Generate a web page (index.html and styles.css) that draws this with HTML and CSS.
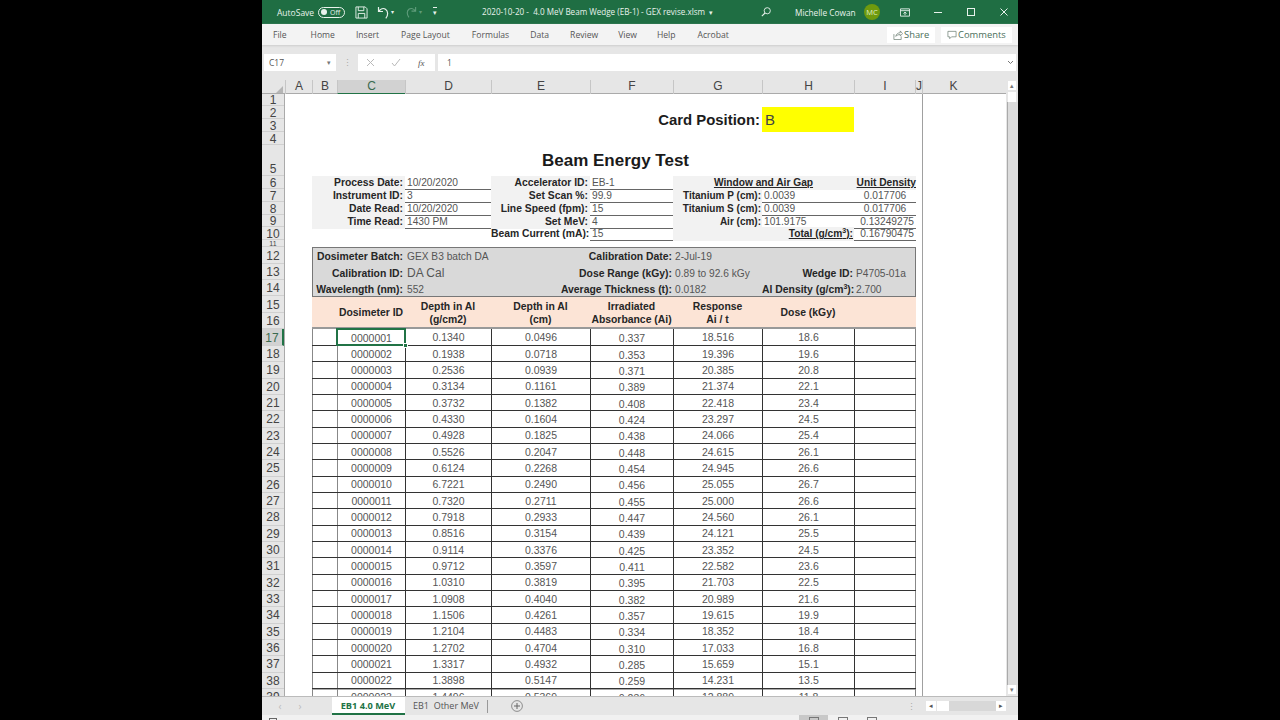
FILE: index.html
```html
<!DOCTYPE html>
<html lang="en">
<head>
<meta charset="utf-8">
<title>2020-10-20 - 4.0 MeV Beam Wedge (EB-1) - GEX revise.xlsm - Excel</title>
<link rel="stylesheet" href="styles.css">
</head>
<body>
<div class="app">
  <header class="titlebar">
    <div class="tb-left">
      <span class="autosave">AutoSave</span>
      <span class="toggle"><i class="knob"></i>Off</span>
      <svg class="qa save" viewBox="0 0 14 14" width="13" height="13"><path d="M1 1h10l2 2v10H1zM3.500 1v4h6V1M3.500 13V8h7v5" fill="none" stroke="#e8f2ec" stroke-width="1"/></svg>
      <svg class="qa undo" viewBox="0 0 12 13" width="12" height="13"><path d="M1.500 1v4.500H6M1.700 5.300C3.500 2.800 6.500 2 8.500 3.300c2.800 2 2.800 6 .3 9" fill="none" stroke="#e8f2ec" stroke-width="1.200"/></svg>
      <span class="caret">▾</span>
      <svg class="qa redo" viewBox="0 0 12 13" width="11" height="12"><path d="M10.500 1v4.500H6M10.300 5.300C8.500 2.800 5.500 2 3.500 3.300c-2.800 2-2.800 6-.3 9" fill="none" stroke="#5f9c7b" stroke-width="1.200"/></svg>
      <span class="caret dim">▾</span>
      <span class="customize">▾</span>
    </div>
    <div class="doc-title">2020-10-20 -&nbsp; 4.0 MeV Beam Wedge (EB-1) - GEX revise.xlsm <span class="doc-caret">▾</span></div>
    <div class="tb-right">
      <svg class="search" viewBox="0 0 12 12" width="10" height="10"><circle cx="7.500" cy="4.500" r="3.700" fill="none" stroke="#e8f2ec" stroke-width="1.100"/><path d="M4.800 7.200L1 11" stroke="#e8f2ec" stroke-width="1.300"/></svg>
      <span class="user">Michelle Cowan</span>
      <span class="avatar">MC</span>
      <svg class="ribbon-opt" viewBox="0 0 11 9" width="10" height="9"><path d="M.5 .5h10v8H.5zM.5 2.500h10M5.500 7.500V4M3.800 5.700l1.700-1.700 1.700 1.700" fill="none" stroke="#e8f2ec"/></svg>
      <span class="win-min"></span>
      <span class="win-max"></span>
      <svg class="win-close" viewBox="0 0 8 8" width="8" height="8"><path d="M.5.500l7 7M7.500.500l-7 7" stroke="#e8f2ec" fill="none"/></svg>
    </div>
  </header>

  <nav class="menubar">
    <span class="menu m-file">File</span>
    <span class="menu m-home">Home</span>
    <span class="menu m-insert">Insert</span>
    <span class="menu m-page">Page Layout</span>
    <span class="menu m-form">Formulas</span>
    <span class="menu m-data">Data</span>
    <span class="menu m-review">Review</span>
    <span class="menu m-view">View</span>
    <span class="menu m-help">Help</span>
    <span class="menu m-acro">Acrobat</span>
    <span class="menu-spacer"></span>
    <span class="menu-btn share"><svg viewBox="0 0 11 11" width="10" height="10"><path d="M1 4.500v6h8V7M3 7c.5-2.500 2.500-4 5-4V1l2.500 3L8 6.500V5c-2 0-3.500.5-5 2z" fill="none" stroke="#6d7f74" stroke-width=".8"/></svg>Share</span>
    <span class="menu-btn comments"><svg viewBox="0 0 11 11" width="10" height="10"><path d="M1 1.500h9v6H5L3 9.500v-2H1z" fill="none" stroke="#6d7f74" stroke-width=".8"/></svg>Comments</span>
  </nav>

  <div class="formulabar">
    <div class="namebox"><span>C17</span><span class="nb-caret">▾</span></div>
    <span class="fb-dots">⋮</span>
    <div class="fb-buttons">
      <svg viewBox="0 0 9 9" width="9" height="9"><path d="M1 1l7 7M8 1L1 8" stroke="#b9b9b9" stroke-width="1" fill="none"/></svg>
      <svg viewBox="0 0 10 9" width="10" height="9"><path d="M1 5l2.500 3L9 1" stroke="#b9b9b9" stroke-width="1" fill="none"/></svg>
      <span class="fx">fx</span>
    </div>
    <div class="fb-input"><span>1</span><svg viewBox="0 0 7 5" width="7" height="5"><path d="M1 1l2.500 2.500L6 1" fill="none" stroke="#777" stroke-width="1"/></svg></div>
  </div>

  <div class="sheet">
    <div class="sheet-main">
      <div class="colhead">
        <div class="corner"><i></i></div>
        <div class="ch">A</div><div class="ch">B</div><div class="ch sel">C</div><div class="ch">D</div><div class="ch">E</div><div class="ch">F</div><div class="ch">G</div><div class="ch">H</div><div class="ch">I</div><div class="ch">J</div><div class="ch">K</div>
      </div>

      <div class="grid-area">
        <div class="rowhead">
          <div class="rh h12">1</div><div class="rh h13">2</div><div class="rh h13">3</div><div class="rh h13">4</div><div class="rh h31">5</div><div class="rh h13">6</div><div class="rh h13">7</div><div class="rh h13">8</div><div class="rh h12">9</div><div class="rh h13">10</div><div class="rh h7">11</div>
          <div class="rh h17">12</div><div class="rh h16">13</div><div class="rh h16">14</div><div class="rh h17">15</div><div class="rh h16">16</div>
          <div class="rh h17 rsel">17</div><div class="rh hr">18</div><div class="rh hr">19</div><div class="rh hr">20</div><div class="rh hr">21</div><div class="rh hr">22</div><div class="rh hr">23</div><div class="rh hr">24</div><div class="rh hr">25</div><div class="rh hr">26</div><div class="rh hr">27</div><div class="rh hr">28</div><div class="rh hr">29</div><div class="rh hr">30</div><div class="rh hr">31</div><div class="rh hr">32</div><div class="rh hr">33</div><div class="rh hr">34</div><div class="rh hr">35</div><div class="rh hr">36</div><div class="rh hr">37</div><div class="rh hr">38</div><div class="rh hr">39</div>
        </div>

        <main class="page">
          <div class="content">
            <div class="card-row">
              <span class="card-label">Card Position:</span>
              <span class="card-value">B</span>
            </div>
            <h1 class="sheet-title">Beam Energy Test</h1>

            <section class="info">
              <div class="irow h13">
                <span class="lab">Process Date:</span><span class="val">10/20/2020</span>
                <span class="lab">Accelerator ID:</span><span class="val">EB-1</span>
                <span class="lab-u c2g"><u>Window and Air Gap</u></span><span class="lab-u ud"><u>Unit Density</u></span>
              </div>
              <div class="irow h13">
                <span class="lab">Instrument ID:</span><span class="val">3</span>
                <span class="lab">Set Scan %:</span><span class="val">99.9</span>
                <span class="lab small">Titanium P (cm):</span><span class="val">0.0039</span><span class="val num">0.017706</span>
              </div>
              <div class="irow h13">
                <span class="lab">Date Read:</span><span class="val">10/20/2020</span>
                <span class="lab">Line Speed (fpm):</span><span class="val">15</span>
                <span class="lab small">Titanium S (cm):</span><span class="val">0.0039</span><span class="val num">0.017706</span>
              </div>
              <div class="irow h12">
                <span class="lab">Time Read:</span><span class="val">1430 PM</span>
                <span class="lab">Set MeV:</span><span class="val">4</span>
                <span class="lab small">Air (cm):</span><span class="val">101.9175</span><span class="val numr">0.13249275</span>
              </div>
              <div class="irow h13">
                <span></span><span></span>
                <span class="lab nobg">Beam Current (mA):</span><span class="val">15</span>
                <span class="lab total"><u>Total (g/cm<sup>3</sup>):</u></span><span class="val numr">0.16790475</span>
              </div>
            </section>

            <section class="batch">
              <span class="blab first-lab">Dosimeter Batch:</span><span class="bval">GEX B3 batch DA</span>
              <span class="blab">Calibration Date:</span><span class="bval">2-Jul-19</span><span></span><span></span>
              <span class="blab first-lab">Calibration ID:</span><span class="bval big">DA Cal</span>
              <span class="blab">Dose Range (kGy):</span><span class="bval">0.89 to 92.6 kGy</span>
              <span class="blab">Wedge ID:</span><span class="bval">P4705-01a</span>
              <span class="blab first-lab">Wavelength (nm):</span><span class="bval">552</span>
              <span class="blab">Average Thickness (t):</span><span class="bval">0.0182</span>
              <span class="blab">Al Density (g/cm<sup>3</sup>):</span><span class="bval">2.700</span>
            </section>

            <section class="thead">
              <div class="tcell">Dosimeter ID</div>
              <div class="tcell">Depth in Al<br>(g/cm2)</div>
              <div class="tcell">Depth in Al<br>(cm)</div>
              <div class="tcell">Irradiated<br>Absorbance (Ai)</div>
              <div class="tcell">Response<br>Ai / t</div>
              <div class="tcell">Dose (kGy)</div>
              <div class="tcell"></div>
            </section>

            <section class="tbody">
              <div class="row first"><span class="active">0000001<i class="handle"></i></span><span>0.1340</span><span>0.0496</span><span class="lo">0.337</span><span>18.516</span><span>18.6</span><span></span></div>
              <div class="row"><span>0000002</span><span>0.1938</span><span>0.0718</span><span class="lo">0.353</span><span>19.396</span><span>19.6</span><span></span></div>
              <div class="row"><span>0000003</span><span>0.2536</span><span>0.0939</span><span class="lo">0.371</span><span>20.385</span><span>20.8</span><span></span></div>
              <div class="row"><span>0000004</span><span>0.3134</span><span>0.1161</span><span class="lo">0.389</span><span>21.374</span><span>22.1</span><span></span></div>
              <div class="row"><span>0000005</span><span>0.3732</span><span>0.1382</span><span class="lo">0.408</span><span>22.418</span><span>23.4</span><span></span></div>
              <div class="row"><span>0000006</span><span>0.4330</span><span>0.1604</span><span class="lo">0.424</span><span>23.297</span><span>24.5</span><span></span></div>
              <div class="row"><span>0000007</span><span>0.4928</span><span>0.1825</span><span class="lo">0.438</span><span>24.066</span><span>25.4</span><span></span></div>
              <div class="row"><span>0000008</span><span>0.5526</span><span>0.2047</span><span class="lo">0.448</span><span>24.615</span><span>26.1</span><span></span></div>
              <div class="row"><span>0000009</span><span>0.6124</span><span>0.2268</span><span class="lo">0.454</span><span>24.945</span><span>26.6</span><span></span></div>
              <div class="row"><span>0000010</span><span>6.7221</span><span>0.2490</span><span class="lo">0.456</span><span>25.055</span><span>26.7</span><span></span></div>
              <div class="row"><span>0000011</span><span>0.7320</span><span>0.2711</span><span class="lo">0.455</span><span>25.000</span><span>26.6</span><span></span></div>
              <div class="row"><span>0000012</span><span>0.7918</span><span>0.2933</span><span class="lo">0.447</span><span>24.560</span><span>26.1</span><span></span></div>
              <div class="row"><span>0000013</span><span>0.8516</span><span>0.3154</span><span class="lo">0.439</span><span>24.121</span><span>25.5</span><span></span></div>
              <div class="row"><span>0000014</span><span>0.9114</span><span>0.3376</span><span class="lo">0.425</span><span>23.352</span><span>24.5</span><span></span></div>
              <div class="row"><span>0000015</span><span>0.9712</span><span>0.3597</span><span class="lo">0.411</span><span>22.582</span><span>23.6</span><span></span></div>
              <div class="row"><span>0000016</span><span>1.0310</span><span>0.3819</span><span class="lo">0.395</span><span>21.703</span><span>22.5</span><span></span></div>
              <div class="row"><span>0000017</span><span>1.0908</span><span>0.4040</span><span class="lo">0.382</span><span>20.989</span><span>21.6</span><span></span></div>
              <div class="row"><span>0000018</span><span>1.1506</span><span>0.4261</span><span class="lo">0.357</span><span>19.615</span><span>19.9</span><span></span></div>
              <div class="row"><span>0000019</span><span>1.2104</span><span>0.4483</span><span class="lo">0.334</span><span>18.352</span><span>18.4</span><span></span></div>
              <div class="row"><span>0000020</span><span>1.2702</span><span>0.4704</span><span class="lo">0.310</span><span>17.033</span><span>16.8</span><span></span></div>
              <div class="row"><span>0000021</span><span>1.3317</span><span>0.4932</span><span class="lo">0.285</span><span>15.659</span><span>15.1</span><span></span></div>
              <div class="row break"><span>0000022</span><span>1.3898</span><span>0.5147</span><span class="lo">0.259</span><span>14.231</span><span>13.5</span><span></span></div>
              <div class="row"><span>0000023</span><span>1.4496</span><span>0.5369</span><span class="lo">0.236</span><span>12.889</span><span>11.8</span><span></span></div>
            </section>
          </div>
          <div class="page-break"></div>
        </main>
      </div>
    </div>

    <aside class="vscroll">
      <div class="vs-btn">▴</div>
      <div class="vs-thumb"></div>
      <div class="vs-track"></div>
      <div class="vs-btn">▾</div>
    </aside>
  </div>

  <div class="tabbar">
    <span class="tab-nav">‹</span><span class="tab-nav">›</span>
    <span class="tab active-tab">EB1 4.0 MeV</span>
    <span class="tab">EB1&nbsp; Other MeV</span>
    <span class="tab-sep"></span>
    <svg class="add" viewBox="0 0 12 12" width="12" height="12"><circle cx="6" cy="6" r="5.400" fill="none" stroke="#777" stroke-width=".8"/><path d="M6 3v6M3 6h6" stroke="#666" stroke-width="1"/></svg>
    <span class="tab-spacer"></span>
    <span class="hdots">⋮</span>
    <div class="hscroll"><span class="hs-btn">◂</span><span class="hs-thumb"></span><span class="hs-track"></span><span class="hs-btn">▸</span></div>
  </div>

  <footer class="statusbar">
    <span class="macro"></span>
    <span class="sb-spacer"></span>
    <span class="view-btn on"><i></i></span><span class="view-btn"><i></i></span><span class="view-btn"><i></i></span>
  </footer>
</div>
</body>
</html>
```
FILE: styles.css
```css
* { box-sizing: border-box; }
html, body { margin: 0; height: 100%; background: #000; overflow: hidden; }
body { display: flex; justify-content: center; }
.app { width: 756px; height: 720px; display: flex; flex-direction: column; background: #e6e6e6; overflow: hidden; font-family: "Open Sans", "Noto Sans", sans-serif; color: #444; }

/* title bar */
.titlebar { height: 24px; flex: none; background: #1f6e43; color: #e8f2ec; display: flex; align-items: center; font-size: 8.500px; position: relative; }
.tb-left { display: flex; align-items: center; padding-left: 15px; }
.autosave { width: 41px; }
.toggle { width: 27px; height: 11px; border: 1px solid #e8f2ec; border-radius: 6px; display: flex; align-items: center; gap: 3px; padding-left: 2px; font-size: 7px; }
.knob { width: 6px; height: 6px; background: #e8f2ec; border-radius: 50%; }
.qa { flex: none; }
.save { margin-left: 10px; }
.undo { margin-left: 9px; }
.caret { font-size: 6px; margin-left: 2px; width: 6px; }
.redo { margin-left: 9px; }
.dim { color: #5f9c7b; }
.customize { margin-left: 8px; font-size: 7px; text-decoration: overline; }
.doc-title { position: absolute; left: 220px; top: 5px; white-space: nowrap; font-size: 8.100px; line-height: 14px; }
.doc-caret { font-size: 7px; margin-left: 2px; }
.tb-right { margin-left: auto; display: flex; align-items: center; }
.search { flex: none; }
.user { width: 60px; margin-left: 24px; white-space: nowrap; font-size: 8.300px; }
.avatar { width: 16px; height: 16px; border-radius: 50%; background: #6f9a0e; color: #dfeec0; font-size: 7.500px; line-height: 16px; text-align: center; margin-left: 9px; }
.ribbon-opt { margin-left: 20px; }
.win-min { width: 8px; height: 1px; background: #e8f2ec; margin-left: 24px; }
.win-max { width: 8px; height: 8px; border: 1px solid #e8f2ec; margin-left: 25px; }
.win-close { margin-left: 25px; margin-right: 10px; }

/* menu */
.menubar { height: 21px; flex: none; background: #f3f3f3; display: flex; align-items: center; font-size: 8.600px; color: #555; box-shadow: 0 1px 2px #ccc; z-index: 1; padding-right: 6px; }
.menu { white-space: nowrap; }
.m-file { margin-left: 11px; }
.m-home { margin-left: 24px; }
.m-insert { margin-left: 21px; }
.m-page { margin-left: 22px; }
.m-form { margin-left: 22px; }
.m-data { margin-left: 21px; }
.m-review { margin-left: 21px; }
.m-view { margin-left: 20px; }
.m-help { margin-left: 20px; }
.m-acro { margin-left: 22px; }
.menu-spacer { flex: 1; }
.menu-btn { height: 16px; background: #fff; display: flex; align-items: center; gap: 1px; padding-left: 6px; font-size: 9.400px; color: #4b6f5b; white-space: nowrap; }
.share { width: 48px; }
.comments { width: 71px; margin-left: 6px; }

/* formula bar */
.formulabar { height: 35px; flex: none; display: flex; align-items: center; padding: 9px 2px; }
.namebox { width: 72px; height: 17px; background: #fff; display: flex; align-items: center; justify-content: space-between; padding: 0 5px; font-size: 8.500px; color: #555; }
.nb-caret { font-size: 7px; color: #777; }
.fb-dots { width: 22px; text-align: center; color: #aaa; font-size: 9px; }
.fb-buttons { width: 77px; height: 17px; background: #fff; display: flex; align-items: center; gap: 16px; padding-left: 8px; margin-right: 3px; }
.fx { font-family: "Liberation Serif", serif; font-style: italic; font-size: 9px; color: #555; margin-left: 1px; }
.fb-input { flex: 1; height: 17px; background: #fff; display: flex; align-items: center; justify-content: space-between; padding: 0 2px 0 9px; font-size: 8.500px; color: #555; }

/* sheet */
.sheet { height: 616px; flex: none; display: flex; }
.sheet-main { width: 744px; flex: none; display: flex; flex-direction: column; }

/* column headers */
.colhead { height: 14px; flex: none; display: grid; grid-template-columns: 23px 27px 25px 68px 86px 99px 83px 89px 92px 61px 7px 62px; border-bottom: 1px solid #aaa; font-family: "Liberation Sans", sans-serif; font-size: 12px; color: #444; }
.corner { position: relative; }
.corner i { position: absolute; right: 2px; bottom: 1px; border-left: 7px solid transparent; border-bottom: 7px solid #b5b5b5; }
.ch { text-align: center; line-height: 13px; border-left: 1px solid #c6c6c6; }
.ch.sel { background: #d2d2d2; border-bottom: 1px solid #217346; height: 14px; color: #3a6a4f; }

/* grid body */
.grid-area { flex: 1; display: flex; overflow: hidden; }
.rowhead { width: 23px; flex: none; font-family: "Liberation Sans", sans-serif; font-size: 12px; color: #444; border-right: 1px solid #aaa; }
.rh { display: flex; align-items: center; justify-content: center; border-bottom: 1px solid #d0d0d0; line-height: 12px; padding-top: 1px; overflow: hidden; }
.rh.h31 { align-items: flex-end; }
.rsel { background: #d2d2d2; border-right: 2px solid #217346; color: #3a6a4f; }
.h7 { height: 7px; }
.h12 { height: 12px; }
.h13 { height: 13px; }
.h16 { height: 16px; }
.h17 { height: 17px; }
.h31 { height: 31px; }
.hr { height: 16.330px; flex: none; }
.rh.h7 { font-size: 7px; line-height: 7px; padding-top: 0; }

.page { flex: 1; background: #fff; position: relative; padding-left: 27px; overflow: hidden; }
.content { width: 604px; font-family: "Liberation Sans", sans-serif; }
.page-break { position: absolute; left: 637px; top: 0; bottom: 0; width: 1px; background: #a0a0a0; }

/* card + title */
.card-row { height: 25px; margin-top: 13px; display: flex; justify-content: flex-end; align-items: center; padding-right: 62px; }
.card-label { font-weight: 700; font-size: 14.900px; color: #1c1c1c; margin-right: 2px; white-space: nowrap; }
.card-value { width: 92px; height: 25px; background: #ff0; font-size: 15px; line-height: 26px; padding-left: 3px; color: #444; }
.sheet-title { margin: 13px 0 0; height: 31px; text-align: center; font-size: 17px; font-weight: 700; color: #1a1a1a; line-height: 31px; padding-left: 3px; white-space: nowrap; }

/* info */
.irow { display: grid; grid-template-columns: 93px 86px 99px 83px 89px 92px 62px; font-size: 10.200px; line-height: 13px; }
.lab { background: #f2f2f2; font-weight: 700; font-size: 10.350px; color: #262626; text-align: right; padding-right: 2px; white-space: nowrap; }
.lab.small { font-size: 10px; padding-right: 1px; }
.val { color: #555; padding-left: 2px; border-bottom: 1px solid #666; white-space: nowrap; }
.num { text-align: center; padding-left: 0; }
.numr { text-align: right; padding-right: 2px; }
.lab-u { background: #f2f2f2; font-weight: 700; color: #262626; white-space: nowrap; }
.c2g { grid-column: span 2; text-align: center; }
.ud { text-align: right; }
.lab.total { grid-column: span 2; font-size: 10.200px; padding-right: 1px; }
.lab.nobg { background: none; }
sup { font-size: 7px; line-height: 0; }

/* batch */
.batch { margin-top: 7px; background: #d9d9d9; border: 1px solid #777; border-bottom: 0; height: 49px; display: grid; grid-template-columns: 92px 154px 114px 89px 92px 61px; grid-template-rows: 17px 16px 16px; align-items: center; font-size: 10.400px; white-space: nowrap; }
.blab { font-weight: 700; color: #262626; text-align: right; padding-right: 1px; }
.blab.first-lab { padding-right: 2px; }
.bval { color: #555; padding-left: 2px; font-size: 10.200px; }
.bval.big { font-size: 12px; }

/* table head */
.thead { display: grid; grid-template-columns: 93px 86px 99px 83px 89px 92px 62px; height: 33px; background: #fce4d6; border-top: 1px solid #777; border-bottom: 2px solid #999; font-size: 10.400px; font-weight: 700; color: #262626; }
.tcell { display: flex; align-items: center; justify-content: center; text-align: center; line-height: 13px; padding-top: 1px; }
.tcell:first-child { padding-left: 25px; }

/* table body */
.row { display: grid; grid-template-columns: 26px 68px 86px 99px 83px 89px 92px 61px; height: 16.330px; border-bottom: 1px solid #333; font-size: 10.500px; color: #555; }
.row.first { height: 17px; }
.row.break { box-shadow: 0 1px 0 #aaa; }
.row::before { content: ""; border-left: 1px solid #888; border-right: 1px solid #888; }
.row span { display: flex; align-items: center; justify-content: center; border-right: 1px solid #333; }
.row span:last-child { border-right-color: #888; }
.row .lo { padding-top: 2px; }
.row .active { position: relative; padding-top: 2px; z-index: 1; }
.active::after { content: ""; position: absolute; left: -2px; right: -1px; top: -1px; bottom: -1px; border: 2px solid #217346; }
.handle { position: absolute; right: -3px; bottom: -3px; width: 5px; height: 5px; background: #217346; border: 1px solid #fff; z-index: 2; }

/* scrollbar */
.vscroll { flex: 1; background: #e6e6e6; display: flex; flex-direction: column; align-items: stretch; padding: 1px 2px 2px 2px; }
.vs-btn { height: 9px; flex: none; background: #fff; text-align: center; font-size: 7px; line-height: 9px; color: #777; }
.vs-thumb { height: 10px; flex: none; background: #fff; margin-top: 2px; }
.vs-track { flex: 1; background: #dcdcdc; margin: 0 -2px 0 -1px; border-left: 1px solid #aaa; }

/* tabs */
.tabbar { height: 19px; flex: none; background: #e6e6e6; border-top: 1px solid #bbb; display: flex; align-items: center; font-size: 9px; color: #555; }
.tab-nav { width: 20px; text-align: center; color: #bbb; font-size: 10px; }
.tab-nav:first-child { margin-left: 8px; }
.tab { padding: 0 8px; white-space: nowrap; height: 18px; line-height: 17px; }
.tab.active-tab { background: #fff; color: #217346; font-weight: 700; font-size: 9.200px; margin-left: 22px; border-bottom: 2px solid #217346; width: 73px; text-align: center; padding: 0 1px 0 0; }
.tab-sep { width: 1px; height: 13px; background: #999; }
.add { margin-left: 23px; flex: none; }
.tab-spacer { flex: 1; }
.hdots { color: #aaa; margin-right: 10px; }
.hscroll { width: 80px; height: 10px; display: flex; align-items: center; margin-right: 12px; font-size: 7px; }
.hs-btn { width: 10px; height: 10px; background: #fff; text-align: center; line-height: 10px; color: #555; flex: none; }
.hs-thumb { width: 12px; height: 10px; background: #fff; flex: none; margin-left: 1px; }
.hs-track { flex: 1; height: 10px; background: #d8d8d8; }

/* status */
.statusbar { flex: 1; background: #f1f1f1; display: flex; align-items: flex-start; overflow: hidden; }
.macro { width: 8px; height: 8px; border: 1px solid #666; margin: 3px 0 0 7px; }
.sb-spacer { flex: 1; }
.view-btn { width: 29px; height: 5px; display: flex; justify-content: center; padding-top: 2px; }
.view-btn:last-child { margin-right: 132px; }
.view-btn i { width: 10px; height: 8px; border: 1px solid #777; }
.view-btn.on { background: #c8c8c8; }
```
